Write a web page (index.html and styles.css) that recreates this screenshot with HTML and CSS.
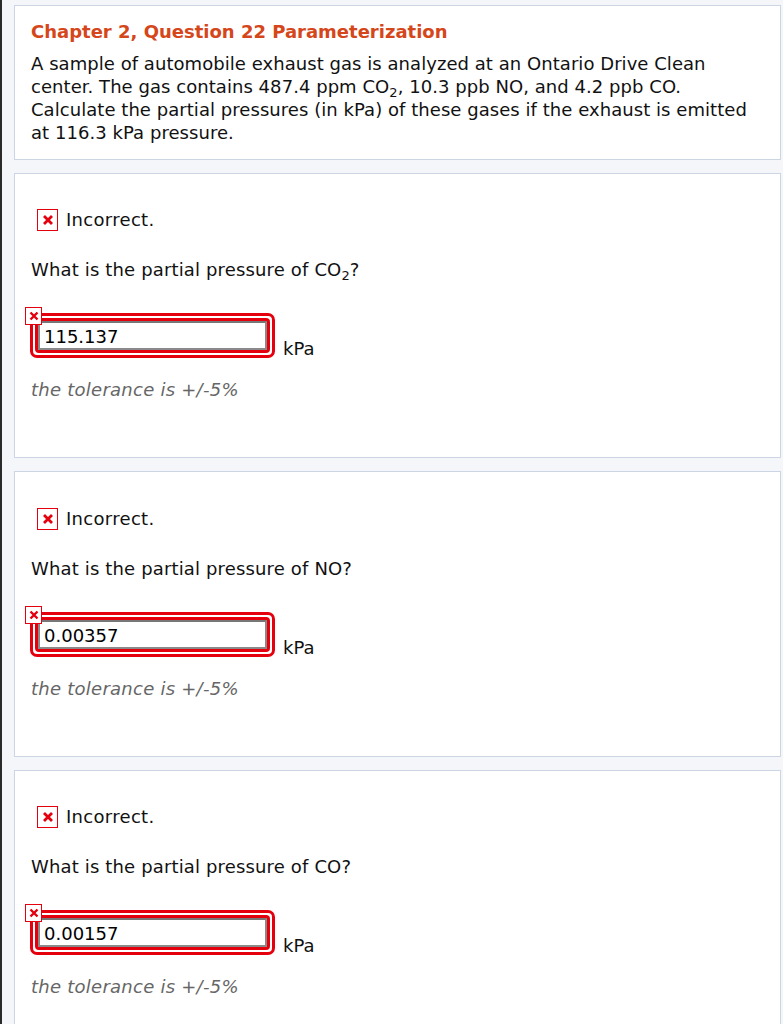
FILE: index.html
```html
<!DOCTYPE html>
<html>
<head>
<meta charset="utf-8">
<link rel="stylesheet" href="styles.css">
</head>
<body>
<div class="page">
  <div class="card intro">
    <h2 class="title">Chapter 2, Question 22 Parameterization</h2>
    <p class="text">A sample of automobile exhaust gas is analyzed at an Ontario Drive Clean center. The gas contains 487.4 ppm CO<sub>2</sub>, 10.3 ppb NO, and 4.2 ppb CO. Calculate the partial pressures (in kPa) of these gases if the exhaust is emitted at 116.3 kPa pressure.</p>
  </div>

  <div class="card part">
    <div class="status">
      <span class="xbox"><svg viewBox="0 0 12 12" width="12" height="12"><path d="M2 2L10 10M10 2L2 10" stroke="#e5000d" stroke-width="2.8" fill="none"/></svg></span>
      <span class="status-text">Incorrect.</span>
    </div>
    <p class="question">What is the partial pressure of CO<sub>2</sub>?</p>
    <div class="answer">
      <div class="field">
        <span class="mark"><svg viewBox="0 0 10 10" width="10" height="10"><path d="M1.5 1.5L8.5 8.5M8.5 1.5L1.5 8.5" stroke="#e5000d" stroke-width="2.4" fill="none"/></svg></span>
        <div class="ring"><div class="input">115.137</div></div>
      </div>
      <span class="unit">kPa</span>
    </div>
    <p class="tol">the tolerance is +/-5%</p>
  </div>

  <div class="card part">
    <div class="status">
      <span class="xbox"><svg viewBox="0 0 12 12" width="12" height="12"><path d="M2 2L10 10M10 2L2 10" stroke="#e5000d" stroke-width="2.8" fill="none"/></svg></span>
      <span class="status-text">Incorrect.</span>
    </div>
    <p class="question">What is the partial pressure of NO?</p>
    <div class="answer">
      <div class="field">
        <span class="mark"><svg viewBox="0 0 10 10" width="10" height="10"><path d="M1.5 1.5L8.5 8.5M8.5 1.5L1.5 8.5" stroke="#e5000d" stroke-width="2.4" fill="none"/></svg></span>
        <div class="ring"><div class="input">0.00357</div></div>
      </div>
      <span class="unit">kPa</span>
    </div>
    <p class="tol">the tolerance is +/-5%</p>
  </div>

  <div class="card part">
    <div class="status">
      <span class="xbox"><svg viewBox="0 0 12 12" width="12" height="12"><path d="M2 2L10 10M10 2L2 10" stroke="#e5000d" stroke-width="2.8" fill="none"/></svg></span>
      <span class="status-text">Incorrect.</span>
    </div>
    <p class="question">What is the partial pressure of CO?</p>
    <div class="answer">
      <div class="field">
        <span class="mark"><svg viewBox="0 0 10 10" width="10" height="10"><path d="M1.5 1.5L8.5 8.5M8.5 1.5L1.5 8.5" stroke="#e5000d" stroke-width="2.4" fill="none"/></svg></span>
        <div class="ring"><div class="input">0.00157</div></div>
      </div>
      <span class="unit">kPa</span>
    </div>
    <p class="tol">the tolerance is +/-5%</p>
  </div>
</div>
</body>
</html>
```

FILE: styles.css
```css
html, body {
  margin: 0;
  padding: 0;
  background: #f4f6f9;
}
body {
  font-family: "DejaVu Sans", Verdana, sans-serif;
  font-size: 18px;
  color: #111;
}
.page {
  border-left: 2px solid #2b2b2b;
  min-height: 1024px;
  box-sizing: border-box;
  padding: 5px 2px 0 12px;
  display: flex;
  flex-direction: column;
  gap: 13px;
}
.card {
  background: #fff;
  border: 1.5px solid #cbd5e3;
  padding: 0 16px;
}
.intro {
  padding-top: 15px;
  padding-bottom: 14.5px;
}
.title {
  margin: 0;
  font-size: 18px;
  line-height: 22px;
  font-weight: bold;
  color: #d5461a;
}
.text {
  margin: 9px 0 0;
  line-height: 23px;
  letter-spacing: 0.05px;
}
sub {
  font-size: 13px;
  line-height: 0;
  vertical-align: -4px;
}
.part {
  padding-top: 35.5px;
  padding-bottom: 56px;
}
.status {
  display: flex;
  align-items: center;
  gap: 8px;
  margin-left: 6px;
}
.xbox {
  width: 19px;
  height: 20px;
  border: 1.5px solid #e5000d;
  display: flex;
  align-items: center;
  justify-content: center;
}
.xbox svg { display: block; }
.status-text {
  line-height: 22px;
  letter-spacing: 0.3px;
}
.question {
  margin: 28px 0 0;
  line-height: 22px;
  letter-spacing: 0.15px;
}
.answer {
  margin-top: 32px;
  display: flex;
  align-items: flex-end;
  gap: 8px;
  margin-left: -1px;
}
.field {
  position: relative;
  width: 245px;
  height: 45px;
  box-sizing: border-box;
  border: 3px solid #e5000d;
  border-radius: 7px;
  padding: 2px;
}
.ring {
  height: 100%;
  box-sizing: border-box;
  border: 3px solid #e5000d;
  border-radius: 4px;
}
.input {
  height: 100%;
  box-sizing: border-box;
  border: 2px solid #8a8a8a;
  border-top-color: #777;
  background: #fff;
  padding: 3px 4px 0;
  line-height: 22px;
  color: #000;
}
.mark {
  position: absolute;
  left: -8px;
  top: -9px;
  width: 15px;
  height: 16px;
  background: #fff;
  border: 1.5px solid #e5000d;
  display: flex;
  align-items: center;
  justify-content: center;
}
.mark svg { display: block; }
.unit {
  line-height: 18px;
}
.tol {
  margin: 21px 0 0;
  line-height: 22px;
  font-style: italic;
  color: #666;
  letter-spacing: 0.25px;
}
```
